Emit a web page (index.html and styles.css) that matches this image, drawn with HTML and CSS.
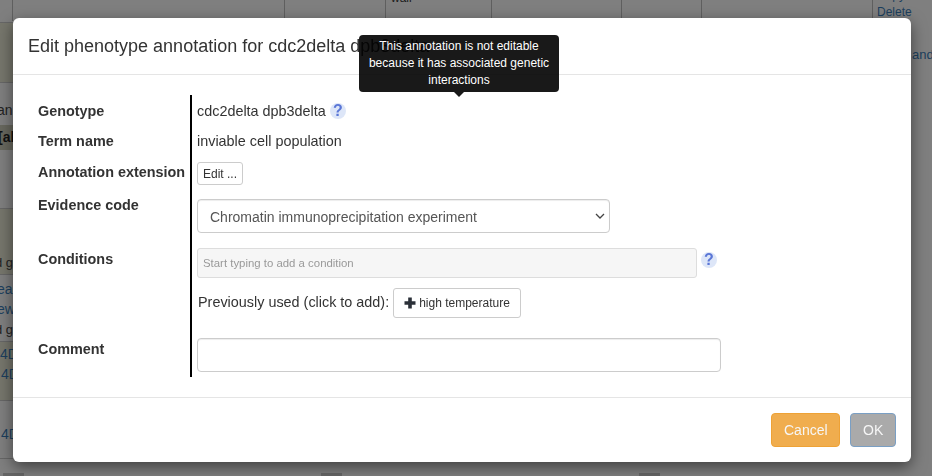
FILE: index.html
```html
<!DOCTYPE html>
<html lang="en">
<head>
<meta charset="utf-8">
<title>Edit phenotype annotation</title>
<link rel="stylesheet" href="styles.css">
</head>
<body>
<div class="page">
  <div class="top-row">
    <div class="cell"></div>
    <div class="cell"></div>
    <div class="cell"></div>
    <div class="cell"><span class="wall">wall</span></div>
    <div class="cell"></div>
    <div class="cell"></div>
    <div class="cell"></div>
    <div class="cell links"><a class="py">Copy</a><a>Delete</a></div>
  </div>
  <div class="below">
    <div class="left-col">
      <div class="lrow h5"></div>
      <div class="lrow h60 olive"></div>
      <div class="lrow h126">
        <span class="frag f-an">an</span>
        <span class="band"><span class="f-al">[al</span></span>
      </div>
      <div class="lrow h66 olive"><span class="frag f-g1">d g</span></div>
      <div class="lrow h67">
        <a class="frag f-ea">ea</a>
        <a class="frag f-ew">ew</a>
        <span class="frag f-g2">d g</span>
      </div>
      <div class="lrow h59 olive">
        <a class="frag f-4d1">4D</a>
        <a class="frag f-4d2">4D</a>
      </div>
      <div class="lrow h58"><a class="frag f-4d3">4D</a></div>
    </div>
    <div class="right-col"><a class="and">and</a></div>
  </div>
  <div class="tabs">
    <span class="tab"></span><span class="tab"></span><span class="tab"></span>
  </div>
</div>

<div class="modal">
  <header class="modal-head">
    <h4>Edit phenotype annotation for cdc2delta dpb3delta</h4>
  </header>
  <div class="tooltip">This annotation is not editable because it has associated genetic interactions</div>
  <main class="modal-body">
    <div class="row r1">
      <div class="lbl">Genotype</div>
      <div class="val val-line">cdc2delta dpb3delta <span class="help">?</span></div>
    </div>
    <div class="row r2">
      <div class="lbl">Term name</div>
      <div class="val">inviable cell population</div>
    </div>
    <div class="row r3">
      <div class="lbl">Annotation extension</div>
      <div class="val"><button class="btn-xs">Edit ...</button></div>
    </div>
    <div class="row r4">
      <div class="lbl">Evidence code</div>
      <div class="val">
        <div class="select-wrap">
          <select class="select">
            <option>Chromatin immunoprecipitation experiment</option>
          </select>
          <svg class="chevron" viewBox="0 0 10 6" width="10" height="6" aria-hidden="true"><path d="M1 1l4 4 4-4"/></svg>
        </div>
      </div>
    </div>
    <div class="row r5">
      <div class="lbl">Conditions</div>
      <div class="val">
        <div class="cond-line">
          <input class="cond-input" placeholder="Start typing to add a condition" disabled>
          <span class="help help-2">?</span>
        </div>
        <div class="prev">
          <span>Previously used (click to add):</span>
          <button class="btn-add">
            <svg class="plus" viewBox="0 0 12 12" width="12" height="12" aria-hidden="true"><path d="M4.2 0.5h3.6v3.7h3.7v3.6H7.8v3.7H4.2V7.8H0.5V4.2h3.7z"/></svg>
            high temperature
          </button>
        </div>
      </div>
    </div>
    <div class="row r6">
      <div class="lbl">Comment</div>
      <div class="val"><textarea class="comment"></textarea></div>
    </div>
  </main>
  <footer class="modal-foot">
    <button class="btn cancel">Cancel</button>
    <button class="btn ok">OK</button>
  </footer>
</div>
</body>
</html>
```
FILE: styles.css
```css
* { box-sizing: border-box; }
html, body { margin: 0; height: 100%; }
body {
  background: #7f7f7f;
  font-family: "Liberation Sans", Arial, sans-serif;
  font-size: 14.4px;
  line-height: 20px;
  color: #333;
  overflow: hidden;
}
a { color: #1c3f5e; }

/* dimmed page behind the dialog */
.page { width: 932px; height: 476px; display: flex; flex-direction: column; overflow: hidden; }
.top-row {
  height: 18px;
  flex: none;
  display: grid;
  grid-template-columns: 13px 272px 101px 106px 130px 80px 171px 59px;
}
.cell { border-right: 1px solid #5f5f5f; font-size: 12px; line-height: 17px; color: #1a1a1a; }
.cell.links { border-right: 0; padding-left: 4px; }
.links a { display: block; }
.links .py { margin-top: -13px; }
.wall { display: block; padding-left: 5px; margin-top: -10px; }
.below { flex: 1; min-height: 0; display: flex; justify-content: space-between; }
.left-col { width: 13px; overflow: hidden; font-size: 14px; color: #222; }
.lrow { position: relative; border-bottom: 1px solid #666; }
.olive { background: #76766c; }
.h5 { height: 5px; }
.h60 { height: 60px; }
.h126 { height: 126px; }
.h66 { height: 66px; }
.h67 { height: 67px; }
.h59 { height: 59px; }
.h58 { height: 58px; }
.frag { position: absolute; white-space: nowrap; }
.f-an { top: 17px; left: -3px; }
.band { position: absolute; top: 42px; left: 0; width: 13px; height: 25px; background: #68685e; overflow: hidden; }
.f-al { display: block; margin-left: -2px; font-weight: bold; color: #111; line-height: 24px; white-space: nowrap; }
.f-g1 { top: 44px; left: -5px; font-size: 13px; }
.f-ea { top: 4px; left: -3px; }
.f-ew { top: 24px; left: -3px; }
.f-g2 { top: 45px; left: -5px; font-size: 13px; }
.f-4d1 { top: 2px; left: 0; }
.f-4d2 { top: 22px; left: 1px; }
.f-4d3 { top: 23px; left: 1px; }
.right-col { width: 21px; padding: 27px 0 0 1px; font-size: 13px; }
.and { display: block; }
.tabs { height: 3px; flex: none; display: flex; gap: 297px; padding-left: 3px; }
.tab { width: 21px; background: #666; }

/* dialog */
.modal {
  position: fixed;
  left: 13px;
  top: 18px;
  width: 898px;
  height: 444px;
  background: #fff;
  border-radius: 6px;
  box-shadow: 0 5px 15px rgba(0, 0, 0, .5);
  display: flex;
  flex-direction: column;
}
.modal-head { height: 57px; flex: none; padding: 15px; border-bottom: 1px solid #e5e5e5; }
.modal-head h4 { margin: 0; font-size: 18px; font-weight: normal; line-height: 26px; }
.tooltip {
  position: absolute;
  left: 346px;
  top: 17px;
  width: 200px;
  height: 57px;
  padding: 3px 8px;
  background: #000;
  color: #fff;
  border-radius: 4px;
  font-size: 12px;
  line-height: 17.14px;
  text-align: center;
  opacity: .9;
}
.tooltip::after {
  content: "";
  position: absolute;
  left: 95px;
  top: 57px;
  border-style: solid;
  border-width: 5px 5px 0;
  border-color: #000 transparent transparent;
}
.modal-body { flex: 1; padding: 20px 25px; }
.row { display: flex; }
.lbl { width: 152px; flex: none; font-weight: bold; white-space: nowrap; }
.val { flex: 1; border-left: 2px solid #000; padding-left: 5px; }
.r1 { height: 31px; }
.r1 .lbl { padding-top: 6px; }
.r1 .val { padding-top: 6px; }
.val-line { display: flex; align-items: flex-start; gap: 4px; }
.r2 { height: 30px; }
.r2 .lbl, .r2 .val { padding-top: 5px; }
.r3 { height: 33px; }
.r3 .lbl { padding-top: 6px; }
.r3 .val { padding-top: 6px; }
.r4 { height: 52px; }
.r4 .lbl { padding-top: 6px; }
.r4 .val { padding-top: 10px; }
.r5 { height: 90px; }
.r5 .lbl { padding-top: 8px; }
.r5 .val { padding-top: 7px; }
.r6 { height: 46px; }
.r6 .lbl { padding-top: 8px; }
.r6 .val { padding-top: 7px; }

.help {
  width: 16px;
  height: 16px;
  flex: none;
  margin-top: 2px;
  border-radius: 50%;
  background: #dde6f8;
  color: #5a76d6;
  font-size: 16px;
  font-weight: bold;
  line-height: 16px;
  text-align: center;
}
.help-2 { margin-top: 4px; margin-left: -1px; }
.btn-xs {
  display: block;
  width: 46px;
  height: 23px;
  padding: 0;
  background: #fff;
  border: 1px solid #ccc;
  border-radius: 3px;
  font: 12px/18px "Liberation Sans", Arial, sans-serif;
  color: #333;
}
.select-wrap { position: relative; width: 413px; }
.select {
  display: block;
  width: 413px;
  height: 34px;
  padding: 7px 12px 5px;
  appearance: none;
  background: #fff;
  border: 1px solid #ccc;
  border-radius: 4px;
  box-shadow: inset 0 1px 1px rgba(0, 0, 0, .075);
  font: 14px/20px "Liberation Sans", Arial, sans-serif;
  color: #555;
}
.chevron { position: absolute; right: 5px; top: 14px; fill: none; stroke: #444; stroke-width: 1.3; }
.cond-line { display: flex; gap: 5px; align-items: flex-start; }
.cond-input {
  width: 500px;
  height: 30px;
  padding: 5px;
  background: #f6f6f6;
  border: 1px solid #ddd;
  border-radius: 3px;
  font: 11.4px/18px "Liberation Sans", Arial, sans-serif;
}
.cond-input::placeholder { color: #999; opacity: 1; }
.prev { display: flex; align-items: flex-start; gap: 4px; margin-top: 10px; padding-left: 1px; }
.prev span { padding-top: 4px; }
.btn-add {
  display: flex;
  align-items: center;
  gap: 3px;
  height: 30px;
  width: 128px;
  padding: 0 10px;
  background: #fff;
  border: 1px solid #ccc;
  border-radius: 3px;
  font: 12px/18px "Liberation Sans", Arial, sans-serif;
  color: #333;
  white-space: nowrap;
}
.plus { flex: none; fill: #2b3038; }
.comment {
  display: block;
  width: 524px;
  height: 34px;
  padding: 6px 12px;
  background: #fff;
  border: 1px solid #ccc;
  border-radius: 4px;
  box-shadow: inset 0 1px 1px rgba(0, 0, 0, .075);
  resize: none;
}
.modal-foot {
  height: 65px;
  flex: none;
  padding: 15px;
  border-top: 1px solid #e5e5e5;
  display: flex;
  justify-content: flex-end;
  gap: 10px;
}
.btn {
  height: 34px;
  padding: 0 12px;
  border-radius: 4px;
  border: 1px solid;
  font: 14px/20px "Liberation Sans", Arial, sans-serif;
  color: #f6f6f6;
}
.cancel { width: 69px; background: #f0ad4e; border-color: #eea236; }
.ok { width: 46px; background: #aaa; border-color: #7a9fc4; }
```
